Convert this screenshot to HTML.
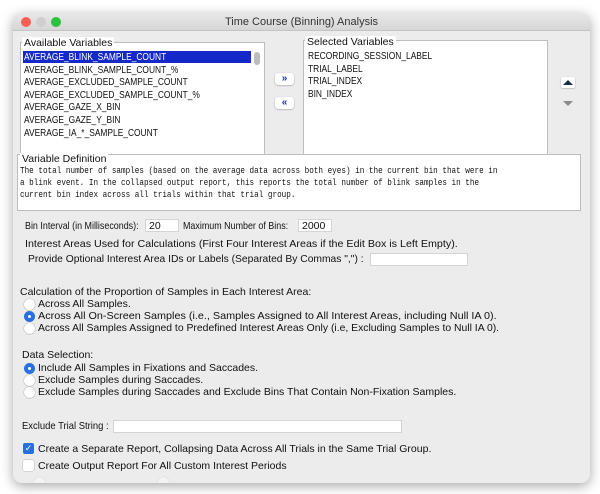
<!DOCTYPE html>
<html><head><meta charset="utf-8"><style>
*{margin:0;padding:0;box-sizing:border-box}
body{width:600px;height:494px;background:#fff;position:relative;overflow:hidden;font-family:"Liberation Sans",sans-serif;font-size:10.5px;color:#111}
.win{position:absolute;left:13px;top:13px;width:577px;height:470px;background:#ececec;border-radius:9px;box-shadow:0 3px 12px rgba(0,0,0,.35);overflow:hidden}
.tb{position:absolute;left:0;top:0;width:100%;height:18px;background:linear-gradient(#e8e8e8,#d6d6d6);border-bottom:1px solid #c4c4c4;text-align:center;font-size:11px;line-height:18px;color:#333}
.dot{position:absolute;top:4px;width:10px;height:10px;border-radius:50%}
.a{position:absolute;white-space:nowrap;transform-origin:0 0}
.box{position:absolute;background:#fff;border:1px solid #bdbdbd}
.lg{position:absolute;background:#fff;font-size:10.5px;padding:0 2px}
.inp{position:absolute;background:#fff;border:1px solid #d4d4d4;height:13px;font-size:10.5px;line-height:12px;padding-left:3px}
.btn{position:absolute;width:19px;height:12px;background:#fff;border-radius:3px;box-shadow:0 0.5px 1.5px rgba(0,0,0,.35);color:#1a3a9a;font-size:10px;font-weight:bold;text-align:center;line-height:11px}
.r{position:absolute;width:11px;height:11px;border-radius:50%;background:#fff;box-shadow:0 0 0 .5px #bbb,0 .5px 1px rgba(0,0,0,.2)}
.r.on{background:#2a6fe0;box-shadow:none}
.r.on::after{content:"";position:absolute;left:4px;top:4px;width:3px;height:3px;border-radius:50%;background:#fff}
.mono{font-family:"Liberation Mono",monospace;font-size:9px;line-height:12px;transform:scaleX(.85)}
.c8{transform:scaleX(.8)}
</style></head><body>
<div class="win">
<div class="tb">Time Course (Binning) Analysis
<div class="dot" style="left:8px;background:#fd5f57"></div>
<div class="dot" style="left:23px;background:#cfcfcf"></div>
<div class="dot" style="left:38px;background:#2cc23f"></div></div>

<div class="box" style="left:7px;top:29px;width:245px;height:117px"></div>
<div class="lg a" style="left:9px;top:24px">Available Variables</div>
<div class="a" style="left:10px;top:38px;width:228px;height:12px;background:#1429c8"></div>
<div class="a" style="left:241px;top:39px;width:6px;height:13px;background:#bcbcbc;border-radius:3px"></div>
<div class="a c8" style="left:11px;top:38px;line-height:12.6px;font-size:10.5px"><span style="color:#fff">AVERAGE_BLINK_SAMPLE_COUNT</span><br>AVERAGE_BLINK_SAMPLE_COUNT_%<br>AVERAGE_EXCLUDED_SAMPLE_COUNT<br>AVERAGE_EXCLUDED_SAMPLE_COUNT_%<br>AVERAGE_GAZE_X_BIN<br>AVERAGE_GAZE_Y_BIN<br>AVERAGE_IA_*_SAMPLE_COUNT</div>
<div class="a" style="left:8px;top:134px;width:243px;height:11px;background:#fff;border-bottom:1px solid #bdbdbd"></div>

<div class="btn" style="left:262px;top:60px">&#187;</div>
<div class="btn" style="left:262px;top:84px">&#171;</div>

<div class="box" style="left:290px;top:27px;width:245px;height:119px"></div>
<div class="lg a" style="left:292px;top:23px">Selected Variables</div>
<div class="a c8" style="left:295px;top:37px;line-height:12.6px">RECORDING_SESSION_LABEL<br>TRIAL_LABEL<br>TRIAL_INDEX<br>BIN_INDEX</div>
<div class="a" style="left:548px;top:64px;width:14px;height:11px;background:#fff;border-radius:2px;box-shadow:0 .5px 1.5px rgba(0,0,0,.3)"><div style="margin:3px auto 0;width:0;height:0;border-left:5px solid transparent;border-right:5px solid transparent;border-bottom:5px solid #1b2b4a"></div></div>
<div class="a" style="left:550px;top:88px;width:0;height:0;border-left:5px solid transparent;border-right:5px solid transparent;border-top:5px solid #8a8a8a"></div>

<div class="box" style="left:4px;top:141px;width:564px;height:57px"></div>
<div class="lg a" style="left:7px;top:140px">Variable Definition</div>
<div class="a mono" style="left:7px;top:152px">The total number of samples (based on the average data across both eyes) in the current bin that were in<br>a blink event. In the collapsed output report, this reports the total number of blink samples in the<br>current bin index across all trials within that trial group.</div>

<div class="a" style="left:12px;top:207px;transform:scaleX(.85)">Bin Interval (in Milliseconds):</div>
<div class="inp" style="left:132px;top:206px;width:34px">20</div>
<div class="a" style="left:170px;top:207px;transform:scaleX(.85)">Maximum Number of Bins:</div>
<div class="inp" style="left:285px;top:206px;width:34px">2000</div>
<div class="a" style="left:12px;top:225px;transform:scaleX(1.02)">Interest Areas Used for Calculations (First Four Interest Areas if the Edit Box is Left Empty).</div>
<div class="a" style="left:15px;top:240px;transform:scaleX(.98)">Provide Optional Interest Area IDs or Labels (Separated By Commas ",") :</div>
<div class="inp" style="left:357px;top:240px;width:98px"></div>

<div class="a" style="left:7px;top:273px">Calculation of the Proportion of Samples in Each Interest Area:</div>
<div class="r" style="left:11px;top:286px"></div><div class="a" style="left:25px;top:285px">Across All Samples.</div>
<div class="r on" style="left:11px;top:298px"></div><div class="a" style="left:25px;top:297px;transform:scaleX(1.03)">Across All On-Screen Samples (i.e., Samples Assigned to All Interest Areas, including Null IA 0).</div>
<div class="r" style="left:11px;top:310px"></div><div class="a" style="left:25px;top:309px;transform:scaleX(.99)">Across All Samples Assigned to Predefined Interest Areas Only (i.e, Excluding Samples to Null IA 0).</div>

<div class="a" style="left:9px;top:336px">Data Selection:</div>
<div class="r on" style="left:11px;top:350px"></div><div class="a" style="left:25px;top:349px">Include All Samples in Fixations and Saccades.</div>
<div class="r" style="left:11px;top:362px"></div><div class="a" style="left:25px;top:361px">Exclude Samples during Saccades.</div>
<div class="r" style="left:11px;top:374px"></div><div class="a" style="left:25px;top:373px">Exclude Samples during Saccades and Exclude Bins That Contain Non-Fixation Samples.</div>

<div class="a" style="left:9px;top:407px;transform:scaleX(.9)">Exclude Trial String :</div>
<div class="inp" style="left:100px;top:407px;width:289px"></div>
<div class="a" style="left:10px;top:430px;width:11px;height:11px;border-radius:2px;background:#2a6fe0;color:#fff;font-size:9px;line-height:11px;text-align:center">&#10003;</div>
<div class="a" style="left:25px;top:430px">Create a Separate Report, Collapsing Data Across All Trials in the Same Trial Group.</div>
<div class="a" style="left:10px;top:447px;width:11px;height:11px;border-radius:2px;background:#fff;box-shadow:0 0 0 .5px #bbb"></div>
<div class="a" style="left:25px;top:447px">Create Output Report For All Custom Interest Periods</div>
<div class="r" style="left:21px;top:464px;opacity:.4"></div>
<div class="r" style="left:145px;top:464px;opacity:.4"></div>
</div>
</body></html>
